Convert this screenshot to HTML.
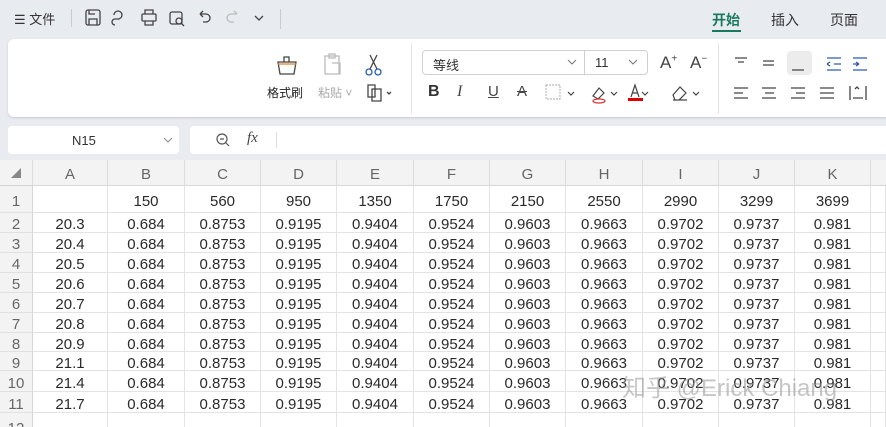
<!DOCTYPE html>
<html><head><meta charset="utf-8"><style>
*{margin:0;padding:0;box-sizing:border-box}
html,body{width:886px;height:427px;overflow:hidden}
body{background:#e8ebf0;font-family:"Liberation Sans","Noto Sans CJK SC",sans-serif;position:relative;color:#333}
.a{position:absolute}
.t{font-size:13px;color:#333}
svg{position:absolute;overflow:visible}
.grid{position:absolute;left:0;top:160px;width:886px;height:267px;background:#fff;overflow:hidden}
.ch{position:absolute;top:0;height:26px;background:#f3f3f3;border-right:1px solid #dcdcdc;border-bottom:1px solid #d6d6d6;text-align:center;line-height:30px;font-size:15px;color:#666}
.rh{position:absolute;left:0;width:33px;background:#f3f3f3;border-bottom:1px solid #e0e0e0;border-right:1px solid #d6d6d6;text-align:center;font-size:15px;color:#666}
.c{position:absolute;text-align:center;font-size:15px;color:#2a2a2a;border-right:1px solid #e3e3e3;border-bottom:1px solid #e3e3e3}
</style></head><body>
<div class="a t" style="left:14px;top:9px;font-size:13px">☰ 文件</div>
<div class="a" style="left:71px;top:9px;width:1px;height:18px;background:#ccc"></div>
<svg style="left:85px;top:9px" width="180" height="18" fill="none" stroke="#444" stroke-width="1.3">
<rect x="1" y="1" width="14" height="15" rx="2"/><path d="M4 16v-6h8v6M4 1v4h6"/>
<path d="M30 16a3 3 0 1 1 0-6h3a4 4 0 1 0-4-4"/>
<rect x="57" y="5" width="14" height="7" rx="1"/><path d="M60 5V1h8v4M60 12v4h8v-4"/>
<rect x="85" y="3" width="12" height="12" rx="2"/><circle cx="94" cy="12" r="3"/><path d="M96 14l3 3"/>
<path d="M115 5h6a4 4 0 0 1 0 8h-3M115 5l3-3M115 5l3 3"/>
<path stroke="#bbb" d="M152 5h-6a4 4 0 0 0 0 8h3M152 5l-3-3"/>
<path d="M170 7l4 4 4-4"/>
</svg>
<div class="a" style="left:280px;top:9px;width:1px;height:20px;background:#ccc"></div>
<div class="a" style="left:712px;top:10px;font-size:14px;font-weight:bold;color:#1a7a5e">开始</div>
<div class="a" style="left:712px;top:30px;width:29px;height:2px;background:#1a7a5e"></div>
<div class="a" style="left:771px;top:10px;font-size:14px;color:#333">插入</div>
<div class="a" style="left:830px;top:10px;font-size:14px;color:#333">页面</div>
<div class="a" style="left:8px;top:39px;width:890px;height:78px;background:#fff;border-radius:6px;box-shadow:0 1px 2px #c8ccd2"></div>
<svg style="left:275px;top:52px" width="130" height="50" fill="none" stroke="#444" stroke-width="1.3">
<path d="M3 10h18l-2 12H5z"/><path d="M9 10V5h5v5"/><path stroke="#d9822b" d="M3 12h18"/>
<path stroke="#bbb" d="M50 4h14v18H50zM54 2h6v4h-6zM57 11h8v11h-8"/>
<circle stroke="#2a5db0" cx="94" cy="20" r="3"/><circle stroke="#2a5db0" cx="103" cy="20" r="3"/><path d="M95 17l7-14M102 17L95 3"/>
<path d="M93 33h7v12h-7zM97 37h9v12h-9z"/><path d="M112 40l2 2 2-2"/>
</svg>
<div class="a" style="left:267px;top:84px;font-size:12px;color:#222">格式刷</div>
<div class="a" style="left:318px;top:84px;font-size:12px;color:#aaa">粘贴 ˅</div>
<div class="a" style="left:411px;top:44px;width:1px;height:70px;background:#e2e2e2"></div>
<div class="a" style="left:422px;top:50px;width:163px;height:25px;border:1px solid #d0d0d0;border-radius:4px 0 0 4px"></div>
<div class="a" style="left:584px;top:50px;width:64px;height:25px;border:1px solid #d0d0d0;border-radius:0 4px 4px 0"></div>
<div class="a" style="left:433px;top:55px;font-size:13px">等线</div>
<div class="a" style="left:595px;top:55px;font-size:13px">11</div>
<svg style="left:568px;top:60px" width="70" height="6" fill="none" stroke="#777"><path d="M0 0l4 4 4-4M61 0l4 4 4-4"/></svg>
<div class="a" style="left:660px;top:53px;font-size:17px;color:#444">A<sup style="font-size:10px">+</sup></div>
<div class="a" style="left:690px;top:53px;font-size:17px;color:#444">A<sup style="font-size:10px">−</sup></div>
<div class="a" style="left:428px;top:83px;font-size:16px;font-weight:bold;color:#333">B</div>
<div class="a" style="left:457px;top:83px;font-size:16px;font-style:italic;font-family:'Liberation Serif',serif;color:#444">I</div>
<div class="a" style="left:488px;top:83px;font-size:15px;text-decoration:underline;color:#444">U</div>
<div class="a" style="left:517px;top:83px;font-size:15px;text-decoration:line-through;color:#444">A</div>
<svg style="left:545px;top:84px" width="170" height="20" fill="none" stroke="#444" stroke-width="1.2">
<rect stroke="#bbb" stroke-dasharray="2 1" x="1" y="1" width="14" height="14"/><path d="M23 8l3 3 3-3"/>
<path d="M48 12l6-8 5 5-6 6z"/><ellipse stroke="#d33" cx="54" cy="17" rx="6" ry="2"/><path d="M66 8l3 3 3-3"/>
<path d="M86 13l4-12 4 12M87 9h6"/><rect fill="#d00" stroke="none" x="83" y="14" width="15" height="3"/><path d="M97 8l3 3 3-3"/>
<path d="M128 11l7-8 6 6-7 7h-4zM128 16h14"/><path d="M148 8l3 3 3-3"/>
</svg>
<div class="a" style="left:718px;top:44px;width:1px;height:70px;background:#e2e2e2"></div>
<div class="a" style="left:787px;top:51px;width:25px;height:24px;background:#ececec;border-radius:4px"></div>
<svg style="left:733px;top:56px" width="140" height="46" fill="none" stroke="#444" stroke-width="1.3">
<path d="M2 2h12M5 6h6M30 5h11M30 9h11M59 14h12"/>
<path stroke="#2a5db0" d="M94 2h14M94 14h14M101 8h7M94 8l3-2M94 8l3 2M120 2h14M120 14h14M120 8h6M126 8l-3-2M126 8l-3 2"/>
<path d="M1 32h14M1 37h9M1 42h14M29 32h14M32 37h9M29 42h14M58 32h14M63 37h9M58 42h14M87 32h14M87 37h14M87 42h14M117 30v14M133 30v14M120 42h10M122 33l2-2 2 2"/>
</svg>
<div class="a" style="left:8px;top:126px;width:171px;height:28px;background:#fff;border-radius:4px"></div>
<div class="a" style="left:72px;top:133px;font-size:13px">N15</div>
<svg style="left:164px;top:138px" width="10" height="6" fill="none" stroke="#888"><path d="M0 0l4 4 4-4"/></svg>
<div class="a" style="left:190px;top:126px;width:700px;height:28px;background:#fff;border-radius:4px 0 0 4px"></div>
<svg style="left:215px;top:132px" width="16" height="16" fill="none" stroke="#555" stroke-width="1.2"><circle cx="7" cy="7" r="5"/><path d="M5 7h4M11 11l3 3"/></svg>
<div class="a" style="left:247px;top:130px;font-size:15px;font-style:italic;font-family:'Liberation Serif',serif;color:#444">fx</div>
<div class="a" style="left:276px;top:132px;width:1px;height:16px;background:#ddd"></div>
<div class="grid" id="g"></div>
<div class="a" style="left:622px;top:368px;font-size:24px;color:rgba(150,150,150,0.55);white-space:nowrap">知乎 @Erick Chiang</div>
<script>
var g=document.getElementById('g');
var cx=[33,108,185,261,337,414,490,566,643,719,795,871,886];
var ry=[26,53,73,93,113,133,153,173,192,211,232,253,280];
var L='ABCDEFGHIJK';
var h='<div class="ch" style="left:0;width:33px;font-size:10px;color:#888">◢</div>';
for(var i=0;i<11;i++)h+='<div class="ch" style="left:'+cx[i]+'px;width:'+(cx[i+1]-cx[i])+'px">'+L[i]+'</div>';
h+='<div class="ch" style="left:871px;width:20px"></div>';
var B=['','150','560','950','1350','1750','2150','2550','2990','3299','3699'];
var A=['20.3','20.4','20.5','20.6','20.7','20.8','20.9','21.1','21.4','21.7'];
var V=['0.684','0.8753','0.9195','0.9404','0.9524','0.9603','0.9663','0.9702','0.9737','0.981'];
for(var r=0;r<12;r++){var y=ry[r],hh=ry[r+1]-ry[r];
h+='<div class="rh" style="top:'+y+'px;height:'+hh+'px;line-height:'+(hh+4)+'px">'+(r+1)+'</div>';
for(var c=0;c<12;c++){var t='';
if(r==0&&c<11)t=B[c];else if(r>0&&r<11&&c<11)t=c==0?A[r-1]:V[c-1];
var w=cx[c+1]-cx[c];
h+='<div class="c" style="left:'+cx[c]+'px;top:'+y+'px;width:'+w+'px;height:'+hh+'px;line-height:'+(hh+4)+'px">'+t+'</div>';}}
g.innerHTML=h;
</script>
</body></html>
